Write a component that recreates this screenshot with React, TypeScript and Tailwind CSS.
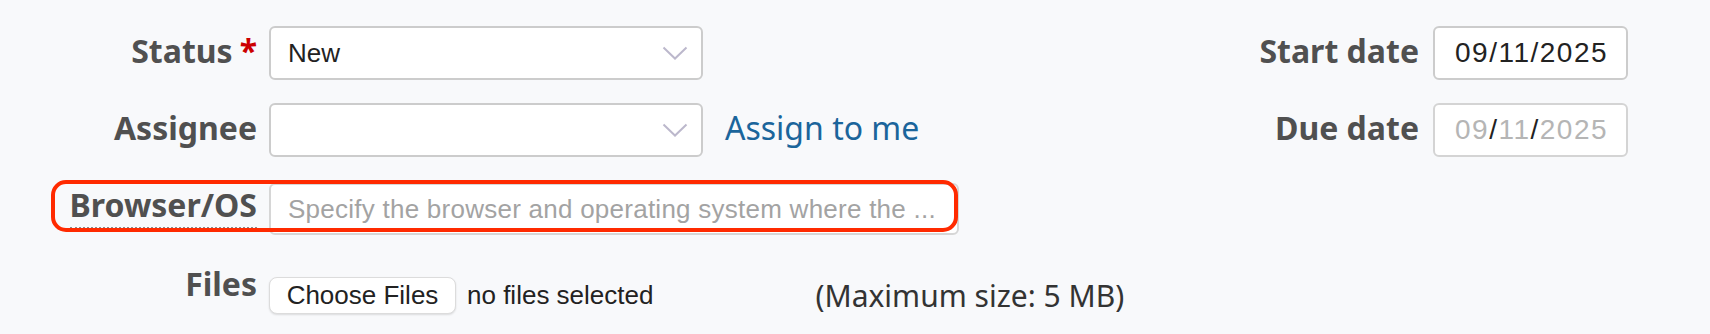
import React from 'react';

const label = "font-['Noto_Sans',sans-serif] font-bold text-[32px] text-[#505050] leading-none";
const field = "font-['Liberation_Sans',Arial,sans-serif] text-[26px] text-[#222]";

const Chevron = () => (
  <svg width="26" height="14" viewBox="0 0 26 14" className="shrink-0">
    <polyline points="1.5,1.5 13,12.5 24.5,1.5" fill="none" stroke="#bcb8cc" strokeWidth="2" />
  </svg>
);

const SelectBox = ({ value }: { value?: string }) => (
  <div className="ml-3 flex h-[54px] w-[434px] items-center justify-between rounded-[6px] border-2 border-[#cccccc] bg-white pl-[17px] pr-[13px]">
    <span className={field}>{value}</span>
    <Chevron />
  </div>
);

const FieldLabel = ({ children }: { children: React.ReactNode }) => (
  <div className={`flex w-[257px] shrink-0 justify-end pb-[5px] ${label}`}>{children}</div>
);

export default function App() {
  return (
    <div className="h-[334px] w-full bg-[#f8f9fb] pt-[26px]">
      <div className="flex justify-between pr-[82px]">
        {/* left column */}
        <div className="flex flex-col">
          <div className="flex items-center">
            <FieldLabel>
              Status<span className="ml-[7px] text-[#cc0000]">*</span>
            </FieldLabel>
            <SelectBox value="New" />
          </div>

          <div className="mt-[23px] flex items-center">
            <FieldLabel>Assignee</FieldLabel>
            <SelectBox />
            <a className="ml-[22px] pb-[4px] font-['Noto_Sans',sans-serif] text-[32px] leading-none text-[#1b659b]">
              Assign to me
            </a>
          </div>

          <div className="relative mt-[26px] flex items-center">
            <div className="flex w-[257px] shrink-0 justify-end">
              <span className={`border-b-2 border-dotted border-[#8a8a8a] pb-[6px] ${label}`}>Browser/OS</span>
            </div>
            <div className="ml-3 flex h-[52px] w-[690px] items-center overflow-hidden rounded-[6px] border-2 border-[#d6d6d6] bg-white pl-[17px] pr-[12px]">
              <span className={`${field} whitespace-nowrap tracking-[0.25px] text-[#a3a3a3]`}>
                Specify the browser and operating system where the ...
              </span>
            </div>
            {/* annotation outline */}
            <div className="pointer-events-none absolute left-[51px] top-[-3px] h-[52px] w-[907px] rounded-[15px] border-[4px] border-[#ff2a00]" />
          </div>

          <div className="mt-[35px] flex items-start">
            <div className={`-mt-[2px] flex w-[257px] shrink-0 justify-end ${label}`}>Files</div>
            <div className="ml-3 mt-[6px] flex items-center">
              <div className={`flex h-[37px] w-[187px] items-center justify-center rounded-[8px] border border-[#dcdcdc] bg-white shadow-[0_1px_2px_rgba(0,0,0,0.12)] ${field}`}>
                Choose Files
              </div>
              <span className={`ml-[11px] ${field}`}>no files selected</span>
              <span className="ml-[162px] font-['Noto_Sans',sans-serif] text-[30px] leading-none text-[#333]">
                (Maximum size: 5 MB)
              </span>
            </div>
          </div>
        </div>

        {/* right column */}
        <div className="flex flex-col items-end">
          <div className="flex items-center">
            <span className={`pb-[5px] ${label}`}>Start date</span>
            <div className="ml-[14px] flex h-[54px] w-[195px] items-center rounded-[6px] border-2 border-[#cccccc] bg-white pl-[20px]">
              <span className="font-['Liberation_Sans',Arial,sans-serif] text-[28px] tracking-[1.5px] text-[#222]">09/11/2025</span>
            </div>
          </div>
          <div className="mt-[23px] flex items-center">
            <span className={`pb-[5px] ${label}`}>Due date</span>
            <div className="ml-[14px] flex h-[54px] w-[195px] items-center rounded-[6px] border-2 border-[#d4d4d4] bg-white pl-[20px]">
              <span className="font-['Liberation_Sans',Arial,sans-serif] text-[28px] tracking-[1.5px] text-[#b5b5b5]">
                09<span className="text-[#222]">/</span>11<span className="text-[#222]">/</span>2025
              </span>
            </div>
          </div>
        </div>
      </div>
    </div>
  );
}
